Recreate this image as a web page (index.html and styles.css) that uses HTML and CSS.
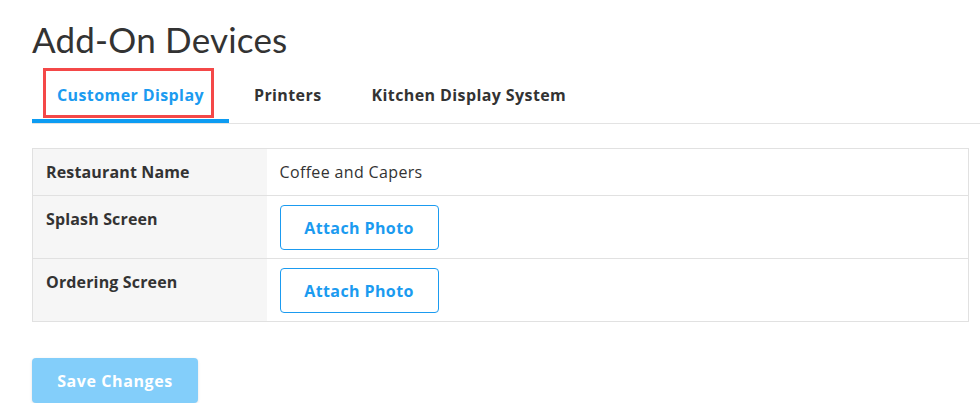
FILE: index.html
```html
<!DOCTYPE html>
<html lang="en">
<head>
<meta charset="utf-8">
<title>Add-On Devices</title>
<link rel="stylesheet" href="styles.css">
</head>
<body>
<main class="page">
  <h1 class="title">Add-On Devices</h1>
  <nav class="tabs">
    <a class="tab tab-active">Customer Display<span class="highlight"></span></a>
    <a class="tab">Printers</a>
    <a class="tab">Kitchen Display System</a>
  </nav>
  <table class="settings">
    <tr class="row-text">
      <th>Restaurant Name</th>
      <td>Coffee and Capers</td>
    </tr>
    <tr class="row-btn">
      <th>Splash Screen</th>
      <td><button class="btn-outline">Attach Photo</button></td>
    </tr>
    <tr class="row-btn">
      <th>Ordering Screen</th>
      <td><button class="btn-outline">Attach Photo</button></td>
    </tr>
  </table>
  <button class="btn-save">Save Changes</button>
</main>
</body>
</html>
```
FILE: styles.css
```css
* { box-sizing: border-box; }
html, body { margin: 0; padding: 0; background: #fff; }
body {
  font-family: "Open Sans", "Noto Sans", "Liberation Sans", sans-serif;
  color: #333;
  font-size: 16px;
}
.page {
  padding: 18px 11px 0 32px;
}
.title {
  margin: 0;
  font-family: Lato, "Open Sans", sans-serif;
  font-size: 35px;
  font-weight: 400;
  line-height: 42px;
  color: #333;
  letter-spacing: 0.2px;
}
.tabs {
  display: flex;
  margin-top: 12px;
  margin-right: -11px;
  border-bottom: 1px solid #e3e3e3;
}
.tab {
  position: relative;
  display: block;
  padding: 12px 25px 13px;
  line-height: 22px;
  font-weight: 700;
  font-size: 16px;
  letter-spacing: 0.4px;
  color: #333;
  border-bottom: 4px solid transparent;
}
.tab-active {
  color: #1b9bf0;
  border-bottom-color: #0d9cf2;
}
.highlight {
  position: absolute;
  left: 11px;
  top: -4px;
  width: 171px;
  height: 50px;
  border: 3px solid #f44848;
}
.settings {
  margin-top: 24px;
  width: 100%;
  border-collapse: collapse;
  border: 1px solid #e1e1e1;
}
.settings th, .settings td {
  border-top: 1px solid #e1e1e1;
  vertical-align: top;
  text-align: left;
  line-height: 22px;
}
.settings th {
  width: 234px;
  background: #f6f6f6;
  font-weight: 700;
  letter-spacing: 0.15px;
  padding: 12px 13px;
  color: #333;
}
.settings td {
  padding: 12px 13px;
  font-weight: 400;
  letter-spacing: 0.35px;
}
.row-btn td {
  padding: 9px 13px 8px;
}
.btn-outline {
  display: block;
  font-family: inherit;
  font-size: 16px;
  font-weight: 700;
  letter-spacing: 0.4px;
  color: #1b9bf0;
  background: #fff;
  border: 1px solid #1b9bf0;
  border-radius: 4px;
  height: 45px;
  width: 159px;
  padding: 0;
  cursor: pointer;
}
.btn-save {
  display: block;
  margin-top: 36px;
  font-family: inherit;
  font-size: 16px;
  font-weight: 700;
  letter-spacing: 0.6px;
  color: #fff;
  background: #83cefa;
  border: none;
  border-radius: 4px;
  height: 45px;
  width: 166px;
  padding: 0;
  box-shadow: 0 1px 3px rgba(0,0,0,0.12);
}
```
